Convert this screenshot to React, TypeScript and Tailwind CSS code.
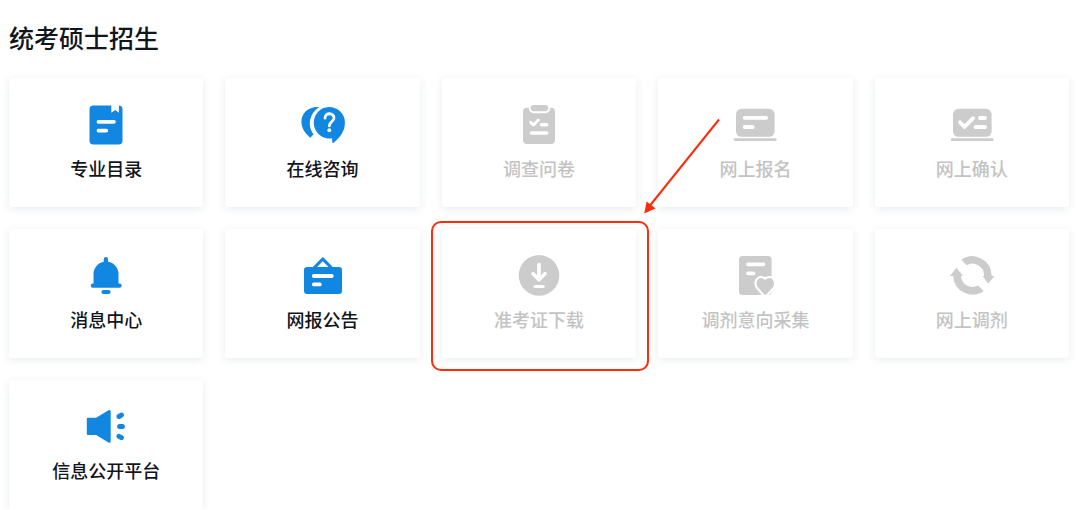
import type { ReactNode } from "react";
import clsx from "clsx";

type Entry = {
  label: string;
  icon: ReactNode;
  disabled?: boolean;
  highlighted?: boolean;
};

const entries: Entry[] = [
  {
    label: "专业目录",
    icon: (
      <>
        <rect x="7.5" y="4.5" width="33" height="39" rx="4" fill="currentColor" />
        <path d="M29.3 4v7.800l3.900-2.900 3.700 2.900V4z" fill="#fff" />
        <path d="M16.500 20.800h15.400M16.500 29.600h7.800" stroke="#fff" strokeWidth="3.800" />
      </>
    ),
  },
  {
    label: "在线咨询",
    icon: (
      <>
        <path d="M20.500 6C9.500 5 2.400 12 2.400 20.500C2.400 27.500 6.200 32 10.600 36.200Q11.400 36.800 12 35.900L14.600 33.200C8.500 25.500 9.500 13 20.500 6z" fill="currentColor" />
        <path d="M30.100 5.900a15.800 15.800 0 0 1 15.800 15.800c0 8.500-4.700 14.300-11 19.900-.7.600-1.700.2-1.600-.7l-.3-3.600a15.800 15.800 0 1 1-2.900-31.400z" fill="currentColor" />
        <path d="M26 17.200c0-6.300 9-5.500 9-.2 0 3.600-4.700 3.500-4.700 7.900" stroke="#fff" strokeWidth="2.800" />
        <circle cx="30.300" cy="29.200" r="1.900" fill="#fff" />
      </>
    ),
  },
  {
    label: "调查问卷",
    disabled: true,
    icon: (
      <>
        <rect x="8" y="6.700" width="32" height="36.300" rx="4" fill="currentColor" />
        <rect x="14.700" y="3" width="19.600" height="8.200" rx="4.100" fill="currentColor" stroke="#fff" strokeWidth="2" />
        <path d="M15.600 21.300l2.900 2.700 4.900-5" stroke="#fff" strokeWidth="3" />
        <path d="M26.500 23.700h5.200M16.400 32h15.300" stroke="#fff" strokeWidth="3.600" />
      </>
    ),
  },
  {
    label: "网上报名",
    disabled: true,
    icon: (
      <>
        <rect x="5" y="7.800" width="38.600" height="28" rx="5.500" fill="currentColor" />
        <path d="M4 38.600h40.400" stroke="currentColor" strokeWidth="2.600" />
        <path d="M13.700 16.800h21.500M13.700 26h8" stroke="#fff" strokeWidth="3.800" />
      </>
    ),
  },
  {
    label: "网上确认",
    disabled: true,
    icon: (
      <>
        <rect x="5" y="7.800" width="38.600" height="28" rx="5.500" fill="currentColor" />
        <path d="M4 38.600h40.400" stroke="currentColor" strokeWidth="2.600" />
        <path d="M12 21.300l4.500 4.600 8.600-8.700" stroke="#fff" strokeWidth="3.800" />
        <path d="M32 17h5M27.500 26h9.500" stroke="#fff" strokeWidth="3.800" />
      </>
    ),
  },
  {
    label: "消息中心",
    icon: (
      <>
        <path d="M23.900 7v5M10.800 33.700h26.800M21.500 40h5" stroke="currentColor" strokeWidth="4.200" />
        <path d="M11.500 33V22a12.500 12.500 0 0 1 25 0v11z" fill="currentColor" />
      </>
    ),
  },
  {
    label: "网报公告",
    icon: (
      <>
        <path d="M13.500 17.500L23.800 7l10.300 10.500" stroke="currentColor" strokeWidth="3.200" />
        <rect x="5" y="15" width="38" height="27" rx="3" fill="currentColor" />
        <path d="M14.800 24h18M14.800 32.400h6" stroke="#fff" strokeWidth="3.800" />
      </>
    ),
  },
  {
    label: "准考证下载",
    disabled: true,
    highlighted: true,
    icon: (
      <>
        <circle cx="24" cy="23.400" r="20.300" fill="currentColor" />
        <path d="M24 12.600v14M18 21.700l6 5.900 6-5.900" stroke="#fff" strokeWidth="3.600" />
        <path d="M20 34.500h8.200" stroke="#fff" strokeWidth="3.200" />
      </>
    ),
  },
  {
    label: "调剂意向采集",
    disabled: true,
    icon: (
      <>
        <rect x="8" y="4" width="32.600" height="39" rx="3.500" fill="currentColor" />
        <path d="M17 12.300h15.500M17 21.300h5.500" stroke="#fff" strokeWidth="3.800" />
        <path
          d="M34.300 28.200C32 25.300 28 25.500 26.400 28.400C25 31 25.400 33.500 27 35.400L33 42.200q1.300 1.200 2.600 0L41.600 35.400C43.200 33.500 43.600 31 42.200 28.400C40.600 25.500 36.600 25.300 34.300 28.200z"
          fill="currentColor"
          stroke="#fff"
          strokeWidth="4.400"
          paintOrder="stroke"
        />
      </>
    ),
  },
  {
    label: "网上调剂",
    disabled: true,
    icon: (
      <>
        <path d="M13.300 7.800A19.300 19.300 0 0 1 43.600 24H46.500L40.300 31.400 34.600 24H36A11.600 11.600 0 0 0 18.700 13.200z" fill="currentColor" />
        <path d="M35.700 38.900A19.300 19.300 0 0 1 5.200 24H2L8.400 15.700 15 24H12.900A11.600 11.600 0 0 0 30 33.600z" fill="currentColor" />
      </>
    ),
  },
  {
    label: "信息公开平台",
    icon: (
      <>
        <path d="M5.800 14.700h8.300L26.500 7.200q2.200-.8 2.200 1.300v29.800q0 2.100-2.200 1.300L14.100 32H5.800q-1 0-1-1V15.700q0-1 1-1z" fill="currentColor" />
        <path d="M37 13.500l2.400-1.400M37.600 23.400h2.800M37 33.300l2.400 1.400" stroke="currentColor" strokeWidth="5" />
      </>
    ),
  },
];

function Highlight() {
  return (
    <>
      <span className="pointer-events-none absolute -top-2 -right-[13px] -bottom-[13px] -left-[11px] rounded-[10px] border-2 border-[#fe2c0a]" />
      <svg
        viewBox="0 0 80 98"
        fill="none"
        aria-hidden="true"
        className="pointer-events-none absolute bottom-full left-full mb-[14px] ml-[6px] h-[98px] w-20"
      >
        <path d="M77 2.500L8 88.500" stroke="#fe2c0a" strokeWidth="2" />
        <path d="M2.200 96.400L4.600 84.400 13.600 91.600z" fill="#fe2c0a" />
      </svg>
    </>
  );
}

function EntryCard({ label, icon, disabled, highlighted }: Entry) {
  return (
    <li className={clsx("relative", highlighted && "z-10")}>
      <button
        type="button"
        disabled={disabled}
        className="flex h-[129px] w-full flex-col items-center rounded-[3px] bg-white pt-[23px] shadow-[0_2px_8px_rgba(40,80,110,0.11)]"
      >
        <svg
          viewBox="0 0 48 48"
          fill="none"
          strokeLinecap="round"
          strokeLinejoin="round"
          aria-hidden="true"
          className={clsx("size-12", disabled ? "text-[#cccccc]" : "text-[#1287e2]")}
        >
          {icon}
        </svg>
        <span
          className={clsx(
            "mt-[7px] text-[18px] leading-6 font-medium whitespace-nowrap",
            disabled ? "text-[#c3c3c3]" : "text-[#11151c]"
          )}
        >
          {label}
        </span>
      </button>
      {highlighted && <Highlight />}
    </li>
  );
}

export default function App() {
  return (
    <main className="bg-white pt-[22px] pr-[11px] pl-[9px] font-['Noto_Sans_CJK_SC',sans-serif]">
      <h1 className="mb-[26px] text-[25px] leading-[30px] font-medium text-[#11151c]">统考硕士招生</h1>
      <ul className="grid grid-cols-5 gap-[22px]">
        {entries.map((entry) => (
          <EntryCard key={entry.label} {...entry} />
        ))}
      </ul>
    </main>
  );
}
